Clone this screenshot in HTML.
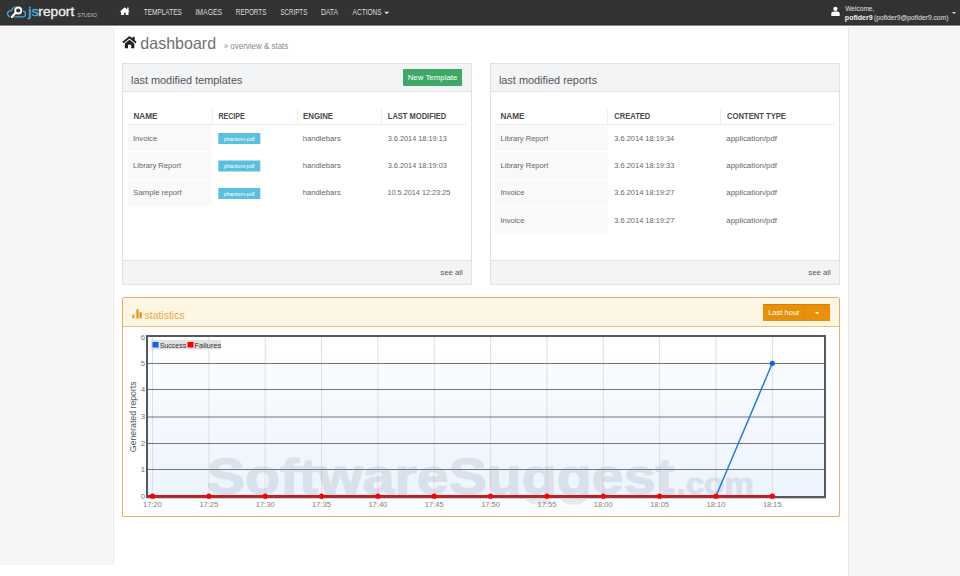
<!DOCTYPE html>
<html><head><meta charset="utf-8">
<style>
html,body{margin:0;padding:0;width:960px;height:576px;overflow:hidden;background:#fff;font-family:"Liberation Sans",sans-serif;}
.a{position:absolute;box-sizing:border-box;}
#nav{left:0;top:0;width:960px;height:26px;background:linear-gradient(to bottom,#333 0,#333 24px,#2b2b2b 24px,#2b2b2b 25px,#8c8c8c 25px,#8c8c8c 26px);}
#lsb{left:0;top:27px;width:114px;height:538px;background:#f6f6f6;border-right:1px solid #e9e9e9;}
#rsb{left:848px;top:27px;width:112px;height:549px;background:#f6f6f6;border-left:1px solid #e6e6e6;}
.panel{border:1px solid #e2e2e2;background:#fff;}
.ph{left:0;top:0;right:0;height:28px;background:#f3f4f6;border-bottom:1px solid #e4e4e4;}
.pf{left:0;bottom:0;right:0;height:24px;background:#f3f4f6;border-top:1px solid #e4e4e4;}
.fc{background:#f9f9f9;}
svg{position:absolute;left:0;top:0;}
</style></head>
<body>
<div id="nav" class="a"></div>
<div id="lsb" class="a"></div>
<div id="rsb" class="a"></div>
<div class="a panel" style="left:122px;top:63px;width:350px;height:222px;">
  <div class="a ph"></div>
  <div class="a" style="left:280px;top:5px;width:59px;height:17px;background:#3ea866;border-radius:1px;"></div>
  <div class="a pf"></div>
</div>
<div class="a panel" style="left:490px;top:63px;width:350px;height:222px;">
  <div class="a ph"></div>
  <div class="a pf"></div>
</div>
<div class="a fc" style="left:128px;top:125px;width:84px;height:26px;"></div>
<div class="a fc" style="left:128px;top:152px;width:84px;height:27px;"></div>
<div class="a fc" style="left:128px;top:180px;width:84px;height:26px;"></div>
<div class="a fc" style="left:495px;top:125px;width:113px;height:26px;"></div>
<div class="a fc" style="left:495px;top:152px;width:113px;height:27px;"></div>
<div class="a fc" style="left:495px;top:180px;width:113px;height:26px;"></div>
<div class="a fc" style="left:495px;top:207px;width:113px;height:27px;"></div>
<div class="a" style="left:122px;top:297px;width:718px;height:220px;border:1px solid #e6ae6c;background:#fff;border-radius:2px;">
  <div class="a" style="left:0;top:0;right:0;height:29px;background:#fdf6e2;border-bottom:1px solid #ebbb80;"></div>
  <div class="a" style="left:640px;top:6px;width:67px;height:17px;background:#e8900a;border-top:1px solid #dc7f00;"></div>
  <div class="a" style="left:681px;top:7px;width:1px;height:16px;background:#dd8709;"></div>
</div>
<svg width="960" height="576" viewBox="0 0 960 576" font-family="Liberation Sans, sans-serif">
<defs>
<linearGradient id="g1" x1="0" y1="0" x2="0" y2="1">
<stop offset="0" stop-color="#fafcff"/>
<stop offset="1" stop-color="#ecf4fd"/>
</linearGradient>
</defs>
<path d="M11 16.8 L23.3 16.8 C26.3 16.8 26.3 11.2 23 11.2 C22.5 8 19.5 6.8 17.5 7.5 C16.5 6.5 12 7 11.5 10.5 C8 10.5 7 13 7.8 14.8 C8.4 16.2 9.5 16.8 11 16.8 Z" fill="none" stroke="#4aaee3" stroke-width="1.25"/>
<circle cx="18.2" cy="10.5" r="4.9" fill="#333"/>
<path d="M14.9 13.6 L11.9 16.9" stroke="#333" stroke-width="3.6" stroke-linecap="round"/>
<circle cx="18.2" cy="10.5" r="3.05" fill="#333" stroke="#fff" stroke-width="1.9"/>
<path d="M14.9 13.6 L11.9 16.9" stroke="#fff" stroke-width="2.3" stroke-linecap="round"/>
<text x="28.27" y="16.10" font-size="13.3" fill="#4fb0e6" textLength="10.58" lengthAdjust="spacingAndGlyphs" stroke="#4fb0e6" stroke-width="0.35">js</text>
<text x="38.30" y="16.10" font-size="13.3" fill="#eeeeee" textLength="36.00" lengthAdjust="spacingAndGlyphs" stroke="#eeeeee" stroke-width="0.35">report</text>
<text x="77.47" y="16.70" font-size="6.1" fill="#c0c0c0" textLength="19.48" lengthAdjust="spacingAndGlyphs">STUDIO</text>
<path d="M124.7 7.3 L119.7 11.8 L121 11.8 L121 15 L124 15 L124 12.7 L125.7 12.7 L125.7 15 L128.5 15 L128.5 11.8 L129.7 11.8 L128.6 10.8 L128.6 7.6 L127.2 7.6 L127.2 9.5 Z" fill="#fff"/>
<text x="143.67" y="14.80" font-size="8.6" fill="#dcdcdc" textLength="38.24" lengthAdjust="spacingAndGlyphs">TEMPLATES</text>
<text x="195.48" y="14.80" font-size="8.6" fill="#dcdcdc" textLength="26.62" lengthAdjust="spacingAndGlyphs">IMAGES</text>
<text x="235.79" y="14.80" font-size="8.6" fill="#dcdcdc" textLength="30.70" lengthAdjust="spacingAndGlyphs">REPORTS</text>
<text x="280.42" y="14.80" font-size="8.6" fill="#dcdcdc" textLength="26.88" lengthAdjust="spacingAndGlyphs">SCRIPTS</text>
<text x="320.96" y="14.80" font-size="8.6" fill="#dcdcdc" textLength="17.07" lengthAdjust="spacingAndGlyphs">DATA</text>
<text x="352.60" y="14.80" font-size="8.6" fill="#dcdcdc" textLength="28.99" lengthAdjust="spacingAndGlyphs">ACTIONS</text>
<path d="M384.2 11.8 L389.2 11.8 L386.7 14.2 Z" fill="#e2e2e2"/>
<g fill="#fff"><circle cx="835.4" cy="8.9" r="2.1"/>
<path d="M831.3 16 L831.3 13.6 C831.3 12.2 832.5 11.5 834 11.5 L837 11.5 C838.5 11.5 839.7 12.2 839.7 13.6 L839.7 16 Z"/></g>
<text x="845.27" y="10.75" font-size="6.6" fill="#e2e2e2" textLength="29.06" lengthAdjust="spacingAndGlyphs">Welcome,</text>
<text x="844.84" y="20.00" font-size="6.8" fill="#f0f0f0" font-weight="bold" textLength="27.91" lengthAdjust="spacingAndGlyphs">pofider9</text>
<text x="874.00" y="20.00" font-size="6.8" fill="#e2e2e2" textLength="74.41" lengthAdjust="spacingAndGlyphs">(pofider9@pofider9.com)</text>
<path d="M952 12 L956 12 L954 14 Z" fill="#e2e2e2"/>
<path d="M123 42.6 L129.5 37.3 L136 42.6" fill="none" stroke="#222" stroke-width="1.9"/><rect x="132.4" y="36.9" width="2.3" height="3.8" fill="#222"/><path d="M124.8 43.6 L129.5 39.8 L134.3 43.6 L134.3 48.3 L131.2 48.3 L131.2 44.8 L128 44.8 L128 48.3 L124.8 48.3 Z" fill="#222"/>
<text x="140.36" y="48.50" font-size="16.5" fill="#707070" textLength="75.70" lengthAdjust="spacingAndGlyphs">dashboard</text>
<text x="223.68" y="48.50" font-size="8.3" fill="#888" textLength="64.59" lengthAdjust="spacingAndGlyphs">» overview &amp; stats</text>
<text x="130.99" y="83.80" font-size="11.3" fill="#555" textLength="111.41" lengthAdjust="spacingAndGlyphs">last modified templates</text>
<text x="407.67" y="80.00" font-size="7.7" fill="#fff" textLength="49.71" lengthAdjust="spacingAndGlyphs">New Template</text>
<text x="498.89" y="83.80" font-size="11.3" fill="#555" textLength="98.23" lengthAdjust="spacingAndGlyphs">last modified reports</text>
<text x="133.47" y="118.80" font-size="8.2" fill="#4a4a4a" font-weight="bold" textLength="24.05" lengthAdjust="spacingAndGlyphs">NAME</text>
<text x="218.44" y="118.80" font-size="8.2" fill="#4a4a4a" font-weight="bold" textLength="26.23" lengthAdjust="spacingAndGlyphs">RECIPE</text>
<text x="302.99" y="118.80" font-size="8.2" fill="#4a4a4a" font-weight="bold" textLength="30.12" lengthAdjust="spacingAndGlyphs">ENGINE</text>
<text x="387.81" y="118.80" font-size="8.2" fill="#4a4a4a" font-weight="bold" textLength="58.51" lengthAdjust="spacingAndGlyphs">LAST MODIFIED</text>
<text x="500.47" y="118.80" font-size="8.2" fill="#4a4a4a" font-weight="bold" textLength="24.05" lengthAdjust="spacingAndGlyphs">NAME</text>
<text x="614.30" y="118.80" font-size="8.2" fill="#4a4a4a" font-weight="bold" textLength="36.04" lengthAdjust="spacingAndGlyphs">CREATED</text>
<text x="727.10" y="118.80" font-size="8.2" fill="#4a4a4a" font-weight="bold" textLength="58.79" lengthAdjust="spacingAndGlyphs">CONTENT TYPE</text>
<g stroke="#eeeeee" stroke-width="1"><line x1="212.5" y1="109" x2="212.5" y2="124"/><line x1="297.5" y1="109" x2="297.5" y2="124"/><line x1="381.5" y1="109" x2="381.5" y2="124"/><line x1="607.5" y1="109" x2="607.5" y2="124"/><line x1="720.5" y1="109" x2="720.5" y2="124"/></g>
<g stroke="#ebebeb" stroke-width="1"><line x1="128" y1="124.5" x2="466" y2="124.5"/><line x1="495" y1="124.5" x2="834" y2="124.5"/></g>
<rect x="218.3" y="133.0" width="42" height="11" fill="#5bc0de"/>
<text x="223.64" y="140.80" font-size="5.6" fill="#fff" textLength="30.86" lengthAdjust="spacingAndGlyphs">phantom-pdf</text>
<rect x="218.3" y="160.5" width="42" height="11" fill="#5bc0de"/>
<text x="223.64" y="168.30" font-size="5.6" fill="#fff" textLength="30.86" lengthAdjust="spacingAndGlyphs">phantom-pdf</text>
<rect x="218.3" y="188.0" width="42" height="11" fill="#5bc0de"/>
<text x="223.64" y="195.70" font-size="5.6" fill="#fff" textLength="30.86" lengthAdjust="spacingAndGlyphs">phantom-pdf</text>
<text x="133.01" y="140.50" font-size="8.0" fill="#666" textLength="24.16" lengthAdjust="spacingAndGlyphs">Invoice</text>
<text x="302.76" y="140.50" font-size="8.0" fill="#666" textLength="37.99" lengthAdjust="spacingAndGlyphs">handlebars</text>
<text x="387.71" y="140.50" font-size="8.0" fill="#666" textLength="59.11" lengthAdjust="spacingAndGlyphs">3.6.2014 18:19:13</text>
<text x="133.09" y="168.00" font-size="8.0" fill="#666" textLength="47.95" lengthAdjust="spacingAndGlyphs">Library Report</text>
<text x="302.76" y="168.00" font-size="8.0" fill="#666" textLength="37.99" lengthAdjust="spacingAndGlyphs">handlebars</text>
<text x="387.71" y="168.00" font-size="8.0" fill="#666" textLength="59.11" lengthAdjust="spacingAndGlyphs">3.6.2014 18:19:03</text>
<text x="133.35" y="195.40" font-size="8.0" fill="#666" textLength="48.29" lengthAdjust="spacingAndGlyphs">Sample report</text>
<text x="302.76" y="195.40" font-size="8.0" fill="#666" textLength="37.99" lengthAdjust="spacingAndGlyphs">handlebars</text>
<text x="387.45" y="195.40" font-size="8.0" fill="#666" textLength="62.83" lengthAdjust="spacingAndGlyphs">10.5.2014 12:23:25</text>
<text x="500.50" y="140.50" font-size="8.0" fill="#666" textLength="47.85" lengthAdjust="spacingAndGlyphs">Library Report</text>
<text x="614.30" y="140.50" font-size="8.0" fill="#666" textLength="59.94" lengthAdjust="spacingAndGlyphs">3.6.2014 18:19:34</text>
<text x="726.29" y="140.50" font-size="8.0" fill="#666" textLength="50.71" lengthAdjust="spacingAndGlyphs">application/pdf</text>
<text x="500.50" y="168.00" font-size="8.0" fill="#666" textLength="47.85" lengthAdjust="spacingAndGlyphs">Library Report</text>
<text x="614.30" y="168.00" font-size="8.0" fill="#666" textLength="60.02" lengthAdjust="spacingAndGlyphs">3.6.2014 18:19:33</text>
<text x="726.29" y="168.00" font-size="8.0" fill="#666" textLength="50.71" lengthAdjust="spacingAndGlyphs">application/pdf</text>
<text x="500.42" y="195.40" font-size="8.0" fill="#666" textLength="23.95" lengthAdjust="spacingAndGlyphs">Invoice</text>
<text x="614.30" y="195.40" font-size="8.0" fill="#666" textLength="60.09" lengthAdjust="spacingAndGlyphs">3.6.2014 18:19:27</text>
<text x="726.29" y="195.40" font-size="8.0" fill="#666" textLength="50.71" lengthAdjust="spacingAndGlyphs">application/pdf</text>
<text x="500.42" y="222.80" font-size="8.0" fill="#666" textLength="23.95" lengthAdjust="spacingAndGlyphs">Invoice</text>
<text x="614.30" y="222.80" font-size="8.0" fill="#666" textLength="60.09" lengthAdjust="spacingAndGlyphs">3.6.2014 18:19:27</text>
<text x="726.29" y="222.80" font-size="8.0" fill="#666" textLength="50.71" lengthAdjust="spacingAndGlyphs">application/pdf</text>
<text x="440.37" y="274.80" font-size="8.0" fill="#555" textLength="22.44" lengthAdjust="spacingAndGlyphs">see all</text>
<text x="808.37" y="274.80" font-size="8.0" fill="#555" textLength="22.44" lengthAdjust="spacingAndGlyphs">see all</text>
<g fill="#e99114">
<rect x="132.4" y="314.6" width="1.9" height="3.9"/>
<rect x="136.4" y="309.2" width="2.2" height="9.3"/>
<rect x="139.5" y="312.2" width="2.2" height="6.3"/>
</g>
<text x="144.49" y="318.50" font-size="10.6" fill="#eea54e" textLength="40.17" lengthAdjust="spacingAndGlyphs">statistics</text>
<text x="768.15" y="314.80" font-size="7.4" fill="#fff" textLength="31.50" lengthAdjust="spacingAndGlyphs">Last hour</text>
<path d="M815 312 L819.6 312 L817.3 314.3 Z" fill="#fff"/>
<rect x="147" y="336" width="678" height="161" fill="#fff"/><rect x="147" y="359" width="678" height="138" fill="url(#g1)"/>
<g stroke="#dedede" stroke-width="1"><line x1="152.50" y1="337" x2="152.50" y2="496"/><line x1="208.85" y1="337" x2="208.85" y2="496"/><line x1="265.20" y1="337" x2="265.20" y2="496"/><line x1="321.55" y1="337" x2="321.55" y2="496"/><line x1="377.90" y1="337" x2="377.90" y2="496"/><line x1="434.25" y1="337" x2="434.25" y2="496"/><line x1="490.60" y1="337" x2="490.60" y2="496"/><line x1="546.95" y1="337" x2="546.95" y2="496"/><line x1="603.30" y1="337" x2="603.30" y2="496"/><line x1="659.65" y1="337" x2="659.65" y2="496"/><line x1="716.00" y1="337" x2="716.00" y2="496"/><line x1="772.35" y1="337" x2="772.35" y2="496"/></g>
<g stroke="#757575" stroke-width="1"><line x1="147" y1="363.5" x2="825" y2="363.5"/><line x1="147" y1="389.5" x2="825" y2="389.5"/><line x1="147" y1="417" x2="825" y2="417"/><line x1="147" y1="443.5" x2="825" y2="443.5"/><line x1="147" y1="469.5" x2="825" y2="469.5"/></g>
<g opacity="0.2">
<text x="206.88" y="494.00" font-size="50" fill="#8a95a8" font-weight="bold" textLength="467.68" lengthAdjust="spacingAndGlyphs" stroke="#8a95a8" stroke-width="1.4" stroke-linejoin="round">SoftwareSuggest</text>
<text x="676.45" y="494.00" font-size="29.5" fill="#8a95a8" font-weight="bold" textLength="77.31" lengthAdjust="spacingAndGlyphs" stroke="#8a95a8" stroke-width="1.0" stroke-linejoin="round">.com</text>
</g>
<line x1="147" y1="498.5" x2="826" y2="498.5" stroke="#d0d0d0" stroke-width="1"/>
<rect x="147" y="336" width="678" height="161" fill="none" stroke="#54585f" stroke-width="2"/>
<rect x="151" y="340" width="70" height="9.3" fill="#dcdcdc" fill-opacity="0.85"/>
<rect x="152.5" y="342" width="6" height="5.5" fill="#0a64f0"/>
<text x="159.68" y="347.80" font-size="7.4" fill="#333" textLength="26.56" lengthAdjust="spacingAndGlyphs">Success</text>
<rect x="187.5" y="342" width="6" height="5.5" fill="#f00"/>
<text x="194.40" y="347.80" font-size="7.4" fill="#333" textLength="26.88" lengthAdjust="spacingAndGlyphs">Failures</text>
<text x="140.79" y="499.35" font-size="7.6" fill="#777" textLength="4.29" lengthAdjust="spacingAndGlyphs">0</text>
<text x="140.46" y="472.15" font-size="7.6" fill="#777" textLength="4.73" lengthAdjust="spacingAndGlyphs">1</text>
<text x="140.69" y="445.95" font-size="7.6" fill="#777" textLength="4.52" lengthAdjust="spacingAndGlyphs">2</text>
<text x="140.79" y="419.35" font-size="7.6" fill="#777" textLength="4.33" lengthAdjust="spacingAndGlyphs">3</text>
<text x="140.95" y="392.05" font-size="7.6" fill="#777" textLength="4.07" lengthAdjust="spacingAndGlyphs">4</text>
<text x="140.79" y="365.95" font-size="7.6" fill="#777" textLength="4.33" lengthAdjust="spacingAndGlyphs">5</text>
<text x="140.70" y="340.45" font-size="7.6" fill="#777" textLength="4.43" lengthAdjust="spacingAndGlyphs">6</text>

<g transform="translate(135.8 416.7) rotate(-90)"><text x="-35.44" y="0.00" font-size="8.6" fill="#555" textLength="70.75" lengthAdjust="spacingAndGlyphs">Generated reports</text>
</g>
<text x="143.04" y="506.90" font-size="7.6" fill="#808080" textLength="18.85" lengthAdjust="spacingAndGlyphs">17:20</text>
<text x="199.38" y="506.90" font-size="7.6" fill="#808080" textLength="18.89" lengthAdjust="spacingAndGlyphs">17:25</text>
<text x="255.74" y="506.90" font-size="7.6" fill="#808080" textLength="18.85" lengthAdjust="spacingAndGlyphs">17:30</text>
<text x="312.08" y="506.90" font-size="7.6" fill="#808080" textLength="18.89" lengthAdjust="spacingAndGlyphs">17:35</text>
<text x="368.44" y="506.90" font-size="7.6" fill="#808080" textLength="18.85" lengthAdjust="spacingAndGlyphs">17:40</text>
<text x="424.78" y="506.90" font-size="7.6" fill="#808080" textLength="18.89" lengthAdjust="spacingAndGlyphs">17:45</text>
<text x="481.14" y="506.90" font-size="7.6" fill="#808080" textLength="18.85" lengthAdjust="spacingAndGlyphs">17:50</text>
<text x="537.48" y="506.90" font-size="7.6" fill="#808080" textLength="18.89" lengthAdjust="spacingAndGlyphs">17:55</text>
<text x="593.84" y="506.90" font-size="7.6" fill="#808080" textLength="18.85" lengthAdjust="spacingAndGlyphs">18:00</text>
<text x="650.18" y="506.90" font-size="7.6" fill="#808080" textLength="18.89" lengthAdjust="spacingAndGlyphs">18:05</text>
<text x="706.54" y="506.90" font-size="7.6" fill="#808080" textLength="18.85" lengthAdjust="spacingAndGlyphs">18:10</text>
<text x="762.88" y="506.90" font-size="7.6" fill="#808080" textLength="18.89" lengthAdjust="spacingAndGlyphs">18:15</text>
<line x1="148" y1="496.1" x2="772.5" y2="496.1" stroke="#f50808" stroke-width="2"/>
<line x1="716.1" y1="496" x2="772.3" y2="363.3" stroke="#2372de" stroke-width="1.4"/>
<circle cx="772.3" cy="363.3" r="2.6" fill="#0f62e6"/>
<circle cx="152.50" cy="496.2" r="2.6" fill="#ff0000"/><circle cx="208.85" cy="496.2" r="2.6" fill="#ff0000"/><circle cx="265.20" cy="496.2" r="2.6" fill="#ff0000"/><circle cx="321.55" cy="496.2" r="2.6" fill="#ff0000"/><circle cx="377.90" cy="496.2" r="2.6" fill="#ff0000"/><circle cx="434.25" cy="496.2" r="2.6" fill="#ff0000"/><circle cx="490.60" cy="496.2" r="2.6" fill="#ff0000"/><circle cx="546.95" cy="496.2" r="2.6" fill="#ff0000"/><circle cx="603.30" cy="496.2" r="2.6" fill="#ff0000"/><circle cx="659.65" cy="496.2" r="2.6" fill="#ff0000"/><circle cx="716.00" cy="496.2" r="2.6" fill="#ff0000"/><circle cx="772.35" cy="496.2" r="2.6" fill="#ff0000"/>
</svg>
</body></html>
